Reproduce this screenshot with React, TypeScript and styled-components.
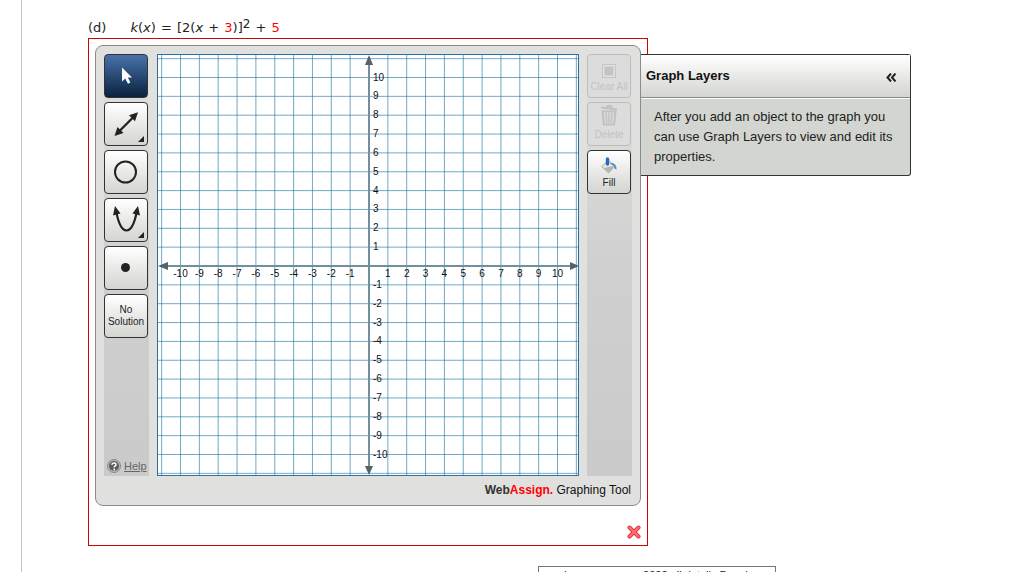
import React from "react";
import styled, { createGlobalStyle, css } from "styled-components";

const GlobalStyle = createGlobalStyle`
  * { box-sizing: border-box; }
  body {
    margin: 0;
    background: #fff;
    font-family: "Liberation Sans", Arial, sans-serif;
    color: #222;
  }
`;

const Page = styled.main`
  height: 100vh;
  overflow: hidden;
  margin-left: 21px;
  padding: 18px 0 0 66px;
  border-left: 1px solid #c4c4c4;
`;

const Question = styled.p`
  display: flex;
  gap: 24px;
  margin: 0;
  height: 20px;
  font: 13px/20px "DejaVu Sans", Verdana, sans-serif;
  color: #222;
  white-space: nowrap;

  sup {
    font-size: 12px;
    line-height: 0;
    vertical-align: 4px;
  }
`;

const Operator = styled.span`
  padding: 0 1px;
`;

const Given = styled.span`
  color: #f00;
`;

const AnswerBox = styled.section`
  width: fit-content;
  padding: 6px 6px 0;
  border: 1px solid #d60000;
`;

const ToolFrame = styled.div`
  position: relative;
  padding: 8px 8px 0;
  border: 1px solid #8b8b8b;
  border-radius: 8px;
  background: #e0e0de;
`;

const Workspace = styled.div`
  display: flex;
  gap: 8px;
`;

const ToolColumn = styled.div`
  display: flex;
  flex-direction: column;
  gap: 4px;
  width: 45px;
  background: linear-gradient(#e0e0de, #d0d0d0 50%, #cacaca);
`;

const ToolButton = styled.button<{ $active?: boolean; $stacked?: boolean }>`
  position: relative;
  display: flex;
  flex-direction: column;
  align-items: center;
  justify-content: ${(p) => (p.$stacked ? "flex-end" : "center")};
  gap: 3px;
  width: 44px;
  height: 44px;
  padding: ${(p) => (p.$stacked ? "0 0 4px" : "0")};
  border: 1px solid #333;
  border-radius: 4px;
  background: linear-gradient(#fff, #d3d5d1);
  color: #222;
  font: 10px/12px "Liberation Sans", Arial, sans-serif;
  white-space: nowrap;

  ${(p) =>
    p.$active &&
    css`
      background: linear-gradient(#4673aa, #0b213e);
    `}

  &:disabled {
    border-color: #bdbdbd;
    background: #dcdcdc;
    color: #c2c2c2;
  }
`;

const MoreMark = styled.span`
  position: absolute;
  right: 3px;
  bottom: 3px;
  border-left: 6px solid transparent;
  border-bottom: 6px solid #222;
`;

const HelpLink = styled.a`
  display: flex;
  align-items: center;
  gap: 3px;
  margin: auto 0 2px 3px;
  color: #666;
  font-size: 11px;
  line-height: 16px;
`;

const Graph = styled.div`
  border: 1px solid #2f6ea5;
  background: #fff;

  svg {
    display: block;
  }

  text {
    font: 10px "Liberation Sans", Arial, sans-serif;
    fill: #111;
  }
`;

const Brand = styled.footer`
  height: 29px;
  padding-right: 1px;
  font-size: 12px;
  line-height: 28px;
  text-align: right;
  color: #111;

  strong {
    color: #333;
  }

  em {
    color: #f00;
    font-style: normal;
  }
`;

const Layers = styled.aside`
  position: absolute;
  top: 8px;
  left: 100%;
  width: 270px;
  margin-left: 1px;
  border: 1px solid #333;
  border-left: 0;
  border-radius: 0 3px 3px 0;
  background: #d3d5d0;
`;

const LayersHeader = styled.header`
  display: flex;
  align-items: center;
  justify-content: space-between;
  height: 43px;
  padding: 0 14px 0 5px;
  border-bottom: 1px solid #888;
  background: linear-gradient(#fff, #d3d5d1);
`;

const LayersTitle = styled.h2`
  margin: 0;
  font-size: 13px;
  line-height: 20px;
  color: #111;
`;

const Collapse = styled.button`
  display: flex;
  padding: 2px 0 0;
  border: 0;
  background: none;
`;

const LayersText = styled.p`
  margin: 0;
  padding: 8px 12px 8px 13px;
  border-top: 1px solid #fff;
  font-size: 13px;
  line-height: 20px;
  color: #222;
`;

const MarkRow = styled.div`
  display: flex;
  align-items: center;
  justify-content: flex-end;
  height: 39px;
  padding: 13px 0 0;
`;

const Notice = styled.div`
  width: 238px;
  margin: 20px 0 0 450px;
  padding: 0 8px 0 16px;
  border: 1px solid #777;
  font-size: 11px;
  line-height: 16px;
  white-space: nowrap;
`;

const STEP = 18.85;
const MID = 211;
const lines = Array.from({ length: 23 }, (_, i) => i - 11).filter((n) => n !== 0);
const labels = lines.filter((n) => Math.abs(n) <= 10);

function CoordinatePlane() {
  return (
    <Graph>
      <svg width="420" height="420" role="img" aria-label="Coordinate plane">
        <g stroke="#1c759e" strokeOpacity="0.62">
          {lines.map((n) => (
            <React.Fragment key={n}>
              <line x1={MID + n * STEP} x2={MID + n * STEP} y1="0" y2="420" />
              <line y1={MID + n * STEP} y2={MID + n * STEP} x1="0" x2="420" />
            </React.Fragment>
          ))}
        </g>
        <path d={`M${MID} 2V418M2 ${MID}H418`} stroke="#718f9c" strokeWidth="2" />
        <g fill="#566268">
          <path d="M211 0l4 10h-8z" />
          <path d="M211 420l4-9h-8z" />
          <path d="M0 211l10-4v8z" />
          <path d="M421 211l-9-4v8z" />
        </g>
        {labels.map((n) => (
          <React.Fragment key={n}>
            <text x={MID + n * STEP} y="222" textAnchor="middle">{n}</text>
            <text x="215" y={MID - n * STEP + 3}>{n}</text>
          </React.Fragment>
        ))}
      </svg>
    </Graph>
  );
}

const PointerIcon = () => (
  <svg width="42" height="42">
    <path d="M17 12.5v14l3.2-3 2.8 5.2 2.4-1.3-2.6-4.8h4.2z" fill="#fff" />
  </svg>
);

const LineIcon = () => (
  <svg width="42" height="42" fill="#222">
    <path d="M14 28.500L29 13.500" stroke="#222" strokeWidth="2.300" />
    <path d="M9.500 33l3-9 6 6z" />
    <path d="M33 9.200l-9 3 6 6z" />
  </svg>
);

const CircleIcon = () => (
  <svg width="42" height="42">
    <circle cx="20.500" cy="21" r="10.500" fill="none" stroke="#222" strokeWidth="2" />
  </svg>
);

const ParabolaIcon = () => (
  <svg width="42" height="42" fill="#222">
    <path d="M11.500 14C14 26 17.500 31.500 21.500 31.500s7.500-5.500 10-17.500" fill="none" stroke="#222" strokeWidth="2.200" />
    <path d="M10 7l5.500 7.500-7.500 2zM33 7l2 9.500-7.500-2z" />
  </svg>
);

const PointIcon = () => (
  <svg width="42" height="42">
    <circle cx="20.500" cy="20.500" r="4.500" fill="#222" />
  </svg>
);

const ClearIcon = () => (
  <svg width="14" height="14">
    <rect x=".5" y=".5" width="13" height="13" fill="#e2e2e2" stroke="#c4c4c4" />
    <rect x="2.500" y="2.500" width="9" height="9" fill="#c4c4c4" />
  </svg>
);

const TrashIcon = () => (
  <svg width="18" height="21" fill="none" stroke="#c1c1c1">
    <path d="M1 2.500l16 2M7 2.500l.5-1.500 4 .5.5 1.500" strokeWidth="2" />
    <path d="M2.500 6.500h13l-1.500 13h-10z" strokeWidth="2" />
    <path d="M6 8l.8 10M9 8v10M12 8l-.8 10" strokeWidth="1.500" />
  </svg>
);

const FillIcon = () => (
  <svg width="16" height="17">
    <path d="M.8 9.500l6.700-6 6.500 6-6.500 6.500z" fill="#e6e6e6" stroke="#a5a5a5" />
    <path d="M3 11l9-2 1 1-5.500 5.500z" fill="#b5b5b5" />
    <path d="M9.500 6c3.500-.5 6.300 2 6 6.500-1.700 0-2.200-1.500-2.500-3-1-1-2-2-3.500-2.500z" fill="#4f91c8" />
    <path d="M6.500 2v5" stroke="#2b6cb9" strokeWidth="3.400" strokeLinecap="round" />
  </svg>
);

const HelpIcon = () => (
  <svg width="14" height="14">
    <circle cx="7" cy="7" r="6.500" fill="#bbb" stroke="#888" />
    <circle cx="7" cy="7" r="5" fill="#5c5c5c" />
    <path d="M5 5.800C5 3.300 9.200 3.400 9 5.700 8.900 7 7.200 6.900 7.200 8.500" fill="none" stroke="#fff" strokeWidth="1.600" />
    <circle cx="7.200" cy="10.500" r="1" fill="#fff" />
  </svg>
);

const CollapseIcon = () => (
  <svg width="10" height="9" fill="none" stroke="#222" strokeWidth="2">
    <path d="M5 .5l-3.500 4L5 8.500M9.500.5L6 4.500l3.500 4" />
  </svg>
);

const WrongIcon = () => (
  <svg width="14" height="14" role="img" aria-label="Incorrect" strokeLinecap="round">
    <path d="M2.500 2.500l9 9M11.500 2.500l-9 9" stroke="#dc3037" strokeWidth="4" />
    <path d="M2.500 2.500l9 9M11.500 2.500l-9 9" stroke="#ff6d70" strokeWidth="2.400" />
  </svg>
);

export default function App() {
  return (
    <>
      <GlobalStyle />
      <Page>
        <Question>
          <span>(d)</span>
          <span>
            <i>k</i>(<i>x</i>) <Operator>=</Operator> [2(<i>x</i> <Operator>+</Operator> <Given>3</Given>)]<sup>2</sup>{" "}
            <Operator>+</Operator> <Given>5</Given>
          </span>
        </Question>
        <AnswerBox>
          <ToolFrame>
            <Workspace>
              <ToolColumn>
                <ToolButton $active aria-label="Select"><PointerIcon /></ToolButton>
                <ToolButton aria-label="Line"><LineIcon /><MoreMark /></ToolButton>
                <ToolButton aria-label="Circle"><CircleIcon /></ToolButton>
                <ToolButton aria-label="Parabola"><ParabolaIcon /><MoreMark /></ToolButton>
                <ToolButton aria-label="Point"><PointIcon /></ToolButton>
                <ToolButton><span>No<br />Solution</span></ToolButton>
                <HelpLink href="#help"><HelpIcon />Help</HelpLink>
              </ToolColumn>
              <CoordinatePlane />
              <ToolColumn>
                <ToolButton $stacked disabled><ClearIcon /><span>Clear All</span></ToolButton>
                <ToolButton $stacked disabled><TrashIcon /><span>Delete</span></ToolButton>
                <ToolButton $stacked><FillIcon /><span>Fill</span></ToolButton>
              </ToolColumn>
            </Workspace>
            <Brand>
              <strong>Web<em>Assign.</em></strong> Graphing Tool
            </Brand>
            <Layers>
              <LayersHeader>
                <LayersTitle>Graph Layers</LayersTitle>
                <Collapse aria-label="Collapse"><CollapseIcon /></Collapse>
              </LayersHeader>
              <LayersText>
                After you add an object to the graph you can use Graph Layers to view and edit its properties.
              </LayersText>
            </Layers>
          </ToolFrame>
          <MarkRow><WrongIcon /></MarkRow>
        </AnswerBox>
        <Notice>a long asur menu 2022 all details Panel</Notice>
      </Page>
    </>
  );
}
